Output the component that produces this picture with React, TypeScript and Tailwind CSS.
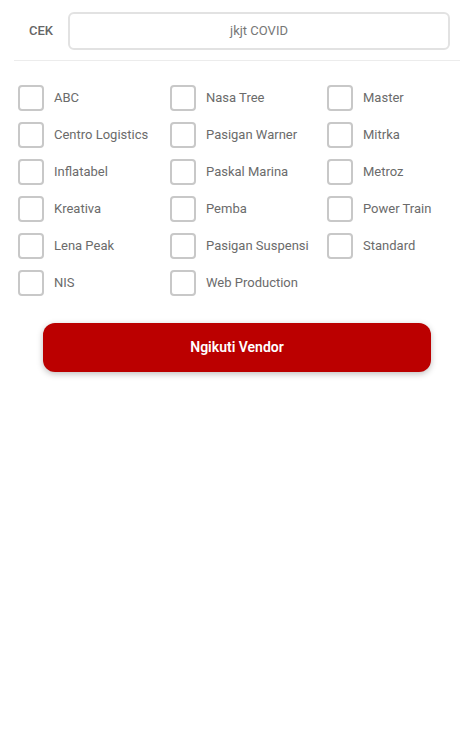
import React from "react";

const columns: string[][] = [
  ["ABC", "Centro Logistics", "Inflatabel", "Kreativa", "Lena Peak", "NIS"],
  ["Nasa Tree", "Pasigan Warner", "Paskal Marina", "Pemba", "Pasigan Suspensi", "Web Production"],
  ["Master", "Mitrka", "Metroz", "Power Train", "Standard"],
];

const CheckRow = ({ label }: { label: string }) => {
  return (
    <label className="flex items-center h-[37px] cursor-pointer">
      <span className="w-[26px] h-[26px] shrink-0 rounded-[4px] border-2 border-[#c8c8c8] bg-white" />
      <span className="ml-[10px] text-[13px] text-[#6b6b6b] whitespace-nowrap">{label}</span>
    </label>
  );
};

export default function App() {
  return (
    <div className="min-h-[750px] bg-white" style={{ fontFamily: "Roboto, 'Noto Sans', sans-serif" }}>
      <div className="mx-[14px] flex items-center pt-[12px] pb-[10px] border-b border-[#ececec]">
        <span className="w-[54px] text-center text-[13px] font-medium text-[#666]">CEK</span>
        <div className="flex-1 h-[38px] mr-[10px] flex items-center justify-center rounded-[6px] border-2 border-[#e2e2e2] bg-white">
          <span className="text-[13px] text-[#777]">jkjt COVID</span>
        </div>
      </div>

      <div className="grid grid-cols-[152px_157px_1fr] pl-[18px] pt-[18px]">
        {columns.map((col, i) => (
          <div key={i} className="flex flex-col">
            {col.map((label) => (
              <CheckRow key={label} label={label} />
            ))}
          </div>
        ))}
      </div>

      <div className="px-[43px] pt-[22px]">
        <button className="w-full h-[49px] rounded-[12px] bg-[#bb0000] shadow-[0_2px_6px_rgba(0,0,0,0.25)] text-white text-[14px] font-semibold">
          Ngikuti Vendor
        </button>
      </div>
    </div>
  );
}
